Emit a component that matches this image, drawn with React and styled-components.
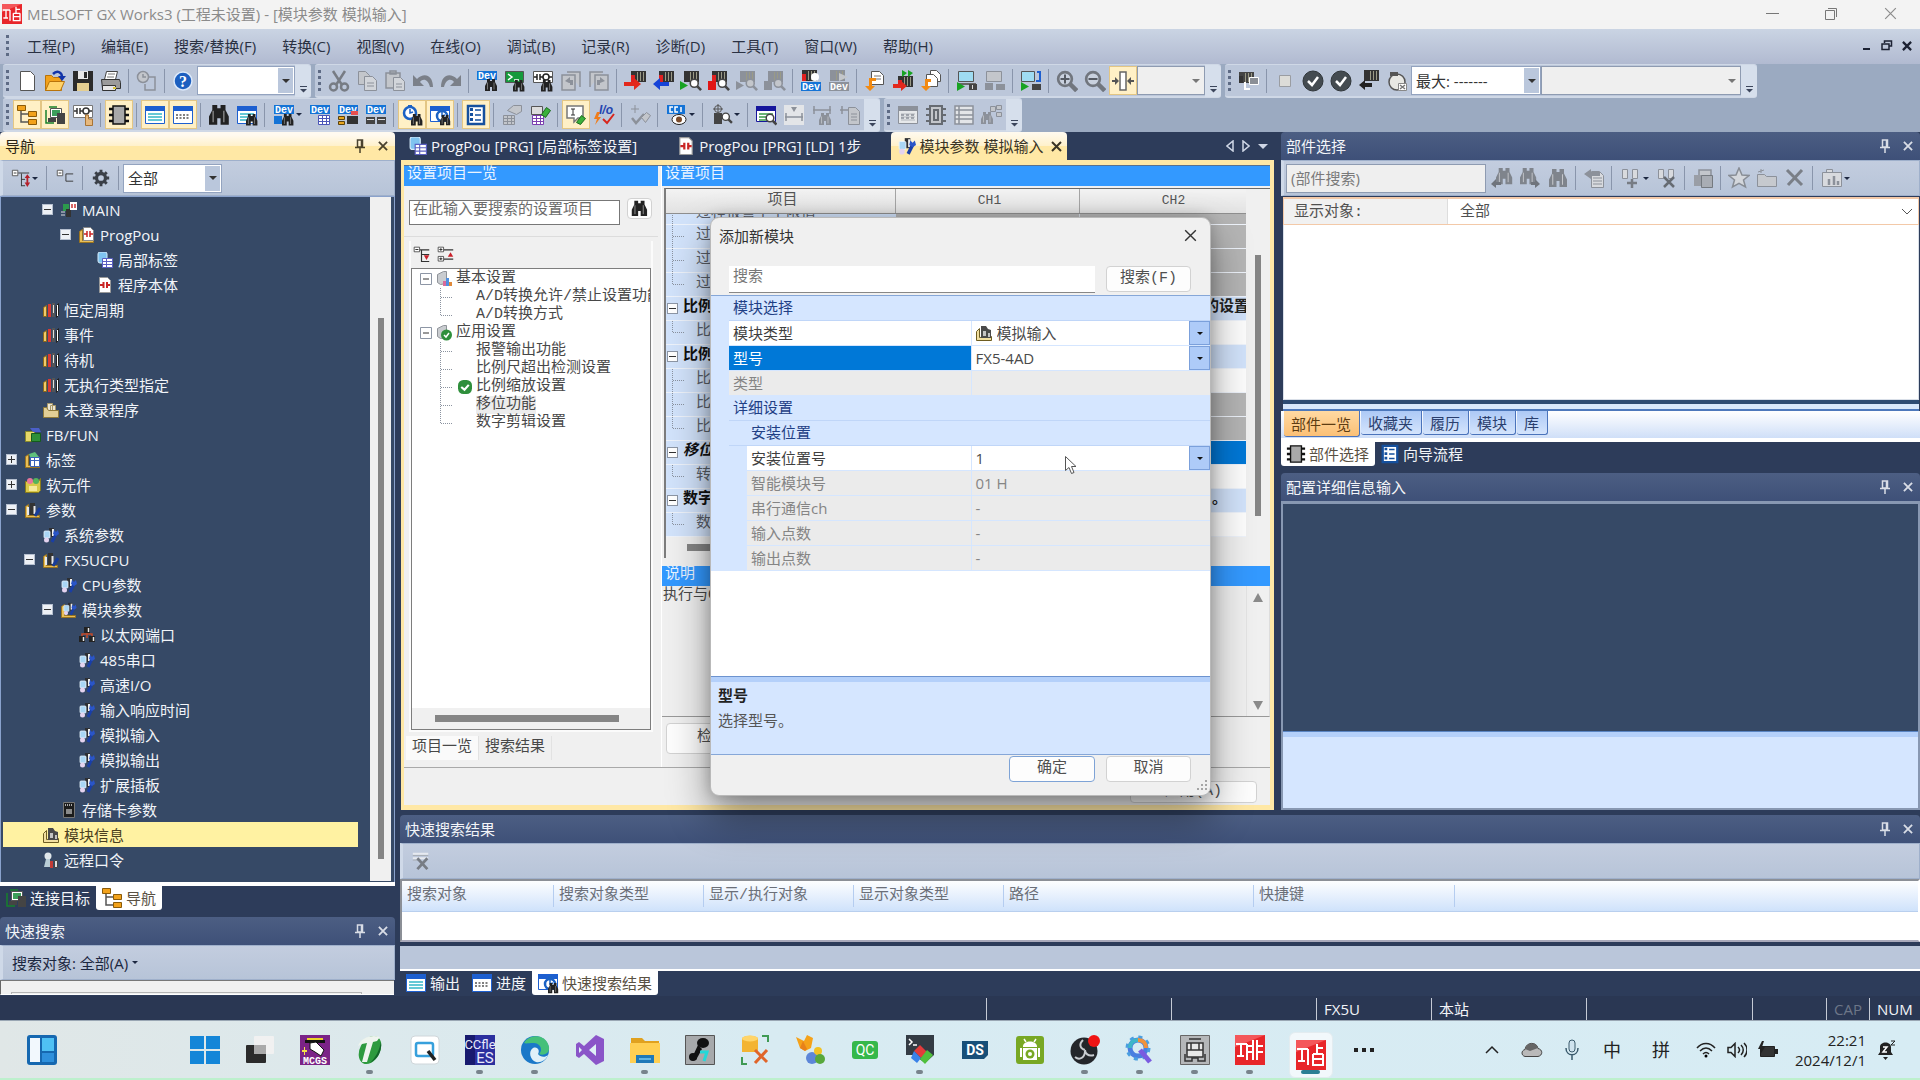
import React from "react";
import styled, { createGlobalStyle, css } from "styled-components";

const UI = `"Open Sans", "Noto Sans CJK SC", sans-serif`;
const FIXED = `"Liberation Mono", "Noto Sans CJK SC", monospace`;

const Global = createGlobalStyle`
  *, *::before, *::after { box-sizing: border-box; }
  body { margin: 0; background: #2d3c5a; font: 15px/20px ${UI}; color: #1c2740; }
  button, input, select { font: inherit; color: inherit; margin: 0; padding: 0; border: 0; border-radius: 0; background: none; }
  button { cursor: default; }
  select { appearance: none; outline: none; }
  input { outline: none; min-width: 0; }
  svg { display: block; flex: none; }
  table { border-collapse: collapse; table-layout: fixed; }
  ul { margin: 0; padding: 0; list-style: none; }
`;

/* ---------- drawing parts shared by the icons ---------- */
const At = ({ x = 0, y = 0, s = 1, children }) => <g transform={`translate(${x} ${y}) scale(${s})`}>{children}</g>;
const Bino = ({ x, y, s, c = "#222" }) => (
  <At x={x} y={y} s={s}>
    <path fill={c} d="M2 0h3v2h2V0h3v3l2 4v5H7V8H5v4H0V7l2-4z" />
    <path stroke="#fff" strokeOpacity=".55" strokeWidth=".7" d="M2.5 3.5v7M9 3.5v7" />
  </At>
);
const Rack = ({ x, y, s, c = "#333", led = "#e02020" }) => (
  <At x={x} y={y} s={s}>
    <path fill={c} d="M0 0h15v11H0z" />
    <path fill={led} d="M0 4h4v7H0z" />
    <path stroke="#9a9a86" d="M6.5 1v9M9.5 1v9M12.5 1v9" />
  </At>
);
const Dev = ({ x = 1, y = 1, w = 20, c = "#1473d6" }) => (
  <At x={x} y={y}>
    <path fill={c} d={`M0 0h${w}v9H0z`} />
    <text x={w / 2} y="8" textAnchor="middle" fontSize="10" fontWeight="700" fontFamily="Liberation Mono, monospace" fill="#fff">Dev</text>
  </At>
);
const Mag = ({ x, y, s, c = "#444", f = "#fff" }) => (
  <At x={x} y={y} s={s}>
    <path stroke={c} strokeWidth="2.5" d="M7.5 7.5l4 4" />
    <circle cx="5" cy="5" r="3.8" fill={f} stroke={c} strokeWidth="1.5" />
  </At>
);
const Win = ({ x = 1, y = 2, w = 20, h = 18, bar = "#1d5fd0", line = "#35b6c8", f = "#fff" }) => (
  <At x={x} y={y}>
    <path fill={f} stroke={bar} d={`M.5 .5h${w - 1}v${h - 1}H.5z`} />
    <path fill={bar} d={`M0 0h${w}v5H0z`} />
    <path stroke={line} strokeWidth="1.5" d={`M3 8h${w - 6}M3 11h${w - 6}M3 14h${w - 6}`} />
  </At>
);
const Page = ({ x, y, w = 12, h = 15, f = "#fff", c = "#555" }) => (
  <At x={x} y={y}><path fill={f} stroke={c} d={`M.5 .5h${w - 5}l4 4v${h - 5}H.5z`} /></At>
);
const Play = ({ x, y, c = "#17a323" }) => <path fill={c} transform={`translate(${x} ${y})`} d="M0 0l8 4.5-8 4.5z" />;
const Grid = ({ x, y, c = "#4a55b8", f = "#fff" }) => (
  <At x={x} y={y}><path fill={f} stroke={c} d="M.5 .5h11v9H.5zM.5 3.5h11M.5 6.5h11M4.5 .5v9M8.5 .5v9" /></At>
);
const Clock = ({ x, y, c = "#1b62c4", r = 6 }) => (
  <At x={x} y={y}>
    <circle cx="7" cy="8" r={r} fill="#fff" stroke={c} strokeWidth="2.5" />
    <path fill={c} d="M5 0h4v2H5z" /><path stroke={c} strokeWidth="1.5" fill="none" d="M7 4v4l3-1" />
  </At>
);
const G = "#8c919a";
const GL = "#c3c6cb";

const tools = {
  newFile: <Page x={4} y={1} w={15} h={20} />,
  open: <><path fill="#f2a21b" stroke="#b8730a" d="M1.5 20.5v-15h6l2 2h8v13z" /><path fill="#ffd36a" stroke="#b8730a" d="M1.5 20.5l4-9h15l-4 9z" /><path fill="none" stroke="#1234a8" strokeWidth="2.5" d="M9 4c4-4 9-2 9 3" /><path fill="#1234a8" d="M14 6h8l-4 5z" /></>,
  save: <><path fill="#2b2b2b" d="M1 1h20v20H1z" /><path fill="#e9e9e9" d="M6 1h10v8H6z" /><path fill="#2b2b2b" d="M12 2h3v6h-3z" /><path fill="#e5cf92" d="M5 13h12v8H5z" /></>,
  print: <><path fill="#fff" stroke="#444" d="M6.5 1.5h11l-2 8h-11z" /><path stroke="#777" d="M8 4h7M7 7h7" /><path fill="#9b9b9b" stroke="#333" d="M1.5 9.5h18l1 3v6h-18z" /><path fill="#e8e8e8" stroke="#333" d="M2.5 15.5h13v5h-13z" /><path fill="#d8c43a" d="M13 17h3v2h-3z" /></>,
  history: <><circle cx="7" cy="7" r="5.5" fill={GL} stroke={G} strokeWidth="1.5" /><path fill="none" stroke={G} strokeWidth="1.5" d="M7 4v3h3M13 7h6v13H9v-6" /></>,
  help: <><circle cx="11" cy="11" r="9" fill="#1c5fc0" stroke="#dbe8fa" strokeWidth="1.5" /><text x="11" y="17" textAnchor="middle" fontSize="16" fontWeight="700" fontFamily="Liberation Serif, serif" fill="#fff">?</text></>,
  cut: <g fill="none" stroke="#777c84" strokeWidth="2.5"><path d="M5 1l9 14M17 1L8 15" /><circle cx="5.5" cy="17" r="3.5" /><circle cx="16.5" cy="17" r="3.5" /></g>,
  copy: <><Page x={2} y={1} w={12} h={14} f={GL} c={G} /><Page x={8} y={6} w={13} h={15} f="#d2d5da" c={G} /><path stroke={G} d="M11 13h7M11 16h7" /></>,
  paste: <><path fill={GL} stroke={G} strokeWidth="1.5" d="M2 3h14v15H2zM6 1h6v3H6z" /><Page x={9} y={7} w={12} h={14} f="#d2d5da" c={G} /><path stroke={G} d="M12 14h6M12 17h6" /></>,
  undo: <path fill="#7b8089" d="M1 5v11h11l-4-4c3-4 8-3 10 5h3C21 5 12 2 5 9z" />,
  redo: <path fill="#7b8089" d="M21 5v11H10l4-4c-3-4-8-3-10 5H1C1 5 10 2 17 9z" />,
  devFind: <><Dev /><Bino x={9} y={9} s={1} /></>,
  cmdFind: <><path fill="#169a3c" stroke="#555" d="M1.5 1.5h18v11h-18z" /><path fill="none" stroke="#fff" strokeWidth="1.5" d="M4 4l4 3-4 3M10 10h5" /><Bino x={9} y={10} s={0.95} /></>,
  coilFind: <><path fill="#fff" stroke="#555" d="M1.5 1.5h19v11h-19z" /><path fill="none" stroke="#222" strokeWidth="1.5" d="M2 7h3M5 4v6M8 4v6M8 7h3M17 7h3" /><circle cx="14" cy="7" r="3" fill="none" stroke="#222" strokeWidth="1.5" /><Bino x={9} y={10} s={0.95} /></>,
  backG: <><path fill={GL} stroke={G} strokeWidth="1.5" d="M2 5h13v15H2zM7 2h13v15" /><path fill={G} d="M5 11l5-4v3h3v5h-3v-2H9z" /></>,
  fwdG: <><path fill={GL} stroke={G} strokeWidth="1.5" d="M7 5h13v15H7zM2 17V2h13" /><path fill={G} d="M17 11l-5-4v3H9v5h3v-2z" /></>,
  writePlc: <><Rack x={7} y={1} /><path fill="#e3281c" d="M0 12h10V8l7 6-7 6v-4H0z" /></>,
  readPlc: <><Rack x={7} y={1} /><path fill="#1643d8" d="M17 12H8V8l-7 6 7 6v-4h9z" /></>,
  monStart: <><Rack x={4} y={1} led="#333" /><Play x={0} y={11} /><Mag x={9} y={8} s={1.05} /></>,
  monStop: <><Rack x={4} y={1} /><path fill="#e01616" d="M0 11h8v9H0z" /><Mag x={9} y={8} s={1.05} /></>,
  monStartG: <><Rack x={4} y={1} c={G} led={G} /><Play x={0} y={11} c={G} /><Mag x={9} y={8} s={1.05} c={G} f={GL} /></>,
  monStopG: <><Rack x={4} y={1} c={G} led={G} /><path fill={G} d="M0 11h8v9H0z" /><Mag x={9} y={8} s={1.05} c={G} f={GL} /></>,
  devRack: <><Rack x={2} y={0} /><circle cx="15" cy="7" r="4" fill="#fff" /><Dev y={12} /></>,
  devRackG: <><Rack x={2} y={0} c={G} led={G} /><path fill={GL} d="M11 3l9 4-9 4z" /><Dev y={12} c={G} /></>,
  stepOne: <><Page x={7} y={1} w={13} h={14} /><path stroke="#777" d="M10 6h7M10 9h7" /><path fill="#f28a12" d="M5 8h7v3H8v5h3l-5 5-5-5h4z" /></>,
  force: <><Rack x={6} y={6} /><path fill="#17a323" d="M10 0l5 3-5 4zM16 0l5 3-5 4z" /><path fill="#e3281c" d="M1 14h8v-3l6 5-6 5v-3H1z" /></>,
  stepMany: <><Page x={10} y={0} w={11} h={12} /><Page x={6} y={4} w={12} h={13} /><path fill="#f28a12" d="M5 9h6v3H8v4h3l-5 5-5-5h4z" /></>,
  pcPlay: <><path fill="#9fdcf2" stroke="#555" d="M2.5 1.5h15v10h-15z" /><path fill="#666" d="M1 13h19v2H1z" /><Play x={1} y={12} /><path fill="#444" d="M13 14h8v6h-8z" /><path stroke="#ddd" d="M16.5 15v4" /></>,
  pcStopG: <><path fill={GL} stroke={G} d="M2.5 1.5h15v10h-15z" /><path fill={G} d="M1 13h8v7H1zM12 14h9v6h-9z" /></>,
  pcLink: <><path fill="#9fdcf2" stroke="#555" d="M1.5 1.5h13v10h-13z" /><path fill="none" stroke="#1d5fd0" strokeWidth="2" d="M17 2h3v9h-4" /><Play x={1} y={12} /><path fill="#444" d="M12 14h9v6h-9z" /></>,
  zoomIn: <><Mag x={0} y={0} s={1.8} c="#71767e" f="#c9d1de" /><path stroke="#555a62" strokeWidth="2" d="M9 4.5v9M4.5 9h9" /></>,
  zoomOut: <><Mag x={0} y={0} s={1.8} c="#71767e" f="#c9d1de" /><path stroke="#555a62" strokeWidth="2" d="M4.5 9h9" /></>,
  fit: <><path fill="#fff" stroke="#666" strokeWidth="1.5" d="M8 2h6v18H8z" /><path fill="#555" d="M0 10h3V7l4 4-4 4v-3H0zM22 10h-3V7l-4 4 4 4v-3h3z" /></>,
  sim: <><Rack x={1} y={2} led="#333" c="#444" /><path fill="#8b8f96" stroke="#fff" d="M11.5 7.5h9v7h-9z" /><path fill="none" stroke="#fff" strokeWidth="2" d="M7 12v7h5" /></>,
  square: <path fill="#dcdcd8" stroke="#9a9da2" d="M5.5 5.5h11v11h-11z" />,
  check: <><circle cx="11" cy="11" r="10" fill="#444b50" stroke="#30363a" /><path fill="none" stroke="#fff" strokeWidth="2.5" d="M6 11l4 4 6-8" /></>,
  rackBack: <><Rack x={6} y={0} led="#333" /><path fill="#222" d="M14 13H7v-3l-6 5 6 5v-3h7z" /></>,
  userX: <><circle cx="11" cy="12" r="8" fill="#e8e8e4" stroke="#555" strokeWidth="1.5" /><path fill="#555" d="M4 2h8v4H4z" /><path fill="#fff" stroke="#888" d="M12.5 13.5h8v7h-8z" /><path stroke="#777" strokeWidth="1.5" d="M14 15l5 4M19 15l-5 4" /></>,
  tree: <><path fill="none" stroke="#555" strokeWidth="1.5" d="M5 6v12h7M5 10h7" /><path fill="#f2a21b" stroke="#8a5a08" d="M1.5 1.5h8v5h-8zM12.5 7.5h8v5h-8zM12.5 15.5h8v5h-8z" /></>,
  conn: <><path fill="none" stroke="#17802c" strokeWidth="1.5" d="M5 3h8M2 6v13h8" /><path fill="#fff" stroke="#555" d="M6.5 4.5h11v9h-11z" /><path fill="#3c9f5a" d="M8 6h8v6H8z" /><path fill="#444" d="M13 9h8v11h-8zM4 14h8v4H4z" /></>,
  coilHand: <><path fill="#fff" stroke="#777" d="M1.5 1.5h19v12h-19z" /><path fill="none" stroke="#333" strokeWidth="1.5" d="M2 7h3M5 4v6M8 4v6M8 7h3M17 7h3" /><circle cx="14" cy="7" r="3" fill="none" stroke="#333" strokeWidth="1.5" /><path fill="#e6b87d" stroke="#a87434" d="M13.5 21.5V11l3 0v4h4v6.5z" /></>,
  chip: <><path fill="none" stroke="#111" strokeWidth="2.5" d="M1 5h20M1 11h20M1 17h20" /><path fill="#a9a9a9" stroke="#111" strokeWidth="1.5" d="M5 2h12v18H5z" /></>,
  winBlue: <Win />,
  winDots: <><Win line="#fff" /><path stroke="#555" strokeDasharray="2 1.5" strokeWidth="1.5" d="M4 11h14M4 14h14" /></>,
  bino: <Bino x={1} y={1} s={1.65} c="#222" />,
  winFind: <><Win /><Bino x={10} y={10} s={0.95} /></>,
  devBino: <><Dev /><path fill="#1473d6" d="M1 12h8v8H1z" /><Bino x={9} y={10} s={0.95} /></>,
  devTable: <><Dev /><Grid x={9} y={11} /></>,
  devFlow: <><Dev /><path fill="#e8a51e" stroke="#5c430c" d="M1.5 12.5h6v3h-6zM1.5 17.5h6v3h-6z" /><path fill="#333" d="M10 12h11v8H10z" /><path fill="#e85050" d="M14 7h7v4h-7z" /></>,
  devUnits: <><Dev /><path fill="#444" d="M1 13h9v7H1zM12 13h9v7h-9z" /><path stroke="#ddd" d="M2 15.5h7M13 15.5h7" /></>,
  clockFind: <><Clock x={2} y={1} /><Bino x={10} y={10} s={0.95} /></>,
  winClock: <><Win h={16} line="#fff" /><Clock x={6} y={4} r={5} /><Bino x={11} y={11} s={0.85} /></>,
  listPage: <><path fill="#fff" stroke="#15509e" strokeWidth="2.5" d="M3 2h16v18H3z" /><path stroke="#15509e" strokeWidth="1.5" d="M10 6h6M10 11h6M10 16h6" /><path fill="#15509e" d="M5 4h3v3H5zM5 9h3v3H5zM5 14h3v3H5z" /></>,
  toolG: <><path fill={GL} stroke={G} d="M6.5 6.5l6-5h8v6l-5 3z" /><Grid x={2} y={11} c={G} f={GL} /></>,
  toolPen: <><path fill="#ddd" stroke="#555" d="M2.5 2.5h11v8h-11z" /><Grid x={3} y={11} c="#7b3fb0" /><path fill="#3bb13b" stroke="#1c6a1c" d="M12.5 10.5l5-7 4 3-5 7z" /></>,
  notePen: <><path fill="#fff" stroke="#777" strokeWidth="1.5" d="M2 2h16v12h-5l-4 4v-4H2z" /><path stroke="#333" d="M6 5h4M8 5v6M6 11h4" /><path fill="#3bb13b" stroke="#1c6a1c" d="M11.5 18.5l5-7 4 3-5 6z" /></>,
  io: <><text x="13" y="10" textAnchor="middle" fontSize="12" fontWeight="700" fontStyle="italic" fontFamily="Liberation Sans, sans-serif" fill="#2444b0">I/o</text><path fill="none" stroke="#d8261c" strokeWidth="2" d="M10 15l4 4 7-9" /><path fill="#f07c1a" d="M4 8L1 15h3l-2 6 6-8H5l2-5z" /></>,
  checkG: <><path stroke={G} d="M6 1v8M2 5h8" /><path fill="none" stroke={G} strokeWidth="2.5" d="M3 14l4 5 8-9" /><path fill={GL} stroke={G} d="M12.5 13.5l5-5 4 3-5 7z" /></>,
  dciEye: <><path fill="#1473d6" d="M1 1h18v9H1z" /><path stroke="#fff" strokeWidth="1.5" fill="none" d="M7 3H4v5h3M12 3H9v5h3M15 3v5" /><ellipse cx="13" cy="15.5" rx="7" ry="5" fill="#fff" stroke="#222" /><circle cx="13" cy="15.5" r="3" fill="#7a4a2a" /></>,
  lampMag: <><path fill="#444" d="M3 9h8v11H3z" /><circle cx="7" cy="5" r="3.5" fill="none" stroke="#555" /><path stroke="#555" d="M7 0v10M2 5h10" /><Mag x={10} y={8} s={0.95} /></>,
  winMag: <><Win h={16} bar="#16169c" line="#3a9a4a" /><Mag x={10} y={9} s={1} /></>,
  rulerG: <><path fill="#e3e5e8" d="M1 1h20v20H1z" /><path stroke={G} strokeWidth="1.5" d="M2 13h18M3 9v8M19 9v8" /><path fill={G} d="M8 3h6l-3 5z" /></>,
  rulerFindG: <><path stroke={G} strokeWidth="1.5" d="M2 6h18M3 2v8M19 2v8" /><Bino x={8} y={9} s={1} c={G} /></>,
  rulerListG: <><path stroke={G} strokeWidth="1.5" d="M1 6h9M3 2v8" /><Page x={9} y={3} w={12} h={18} f={GL} c={G} /><path stroke={G} d="M12 10h6M12 13h6M12 16h6" /></>,
  winG: <><Win bar={G} line={GL} f="#e6e8ea" /><path stroke={G} strokeDasharray="3 2" strokeWidth="1.5" d="M4 11h14M4 14h14" /></>,
  chipG: <><path fill="none" stroke="#666b72" strokeWidth="2" d="M1 5h20M1 11h20M1 17h20" /><path fill={GL} stroke="#666b72" strokeWidth="2" d="M5 2h12v18H5zM9 6h4v10H9z" /></>,
  tableG: <path fill="#e3e5e8" stroke={G} strokeWidth="1.5" d="M2 2h18v18H2zM2 6h18M2 11h18M2 15h18M6 2v18" />,
  structG: <><Bino x={0} y={8} s={1} c={G} /><path fill={GL} stroke={G} d="M9.5 2.5h5v5h-5zM15.5 1.5h5v4h-5zM15.5 8.5h5v4h-5z" /></>,
  binoLeft: <><Bino x={5} y={1} s={1.35} c="#7f848c" /><path fill="#6f747c" d="M10 15H5v-3l-5 5 5 4v-3h5z" /></>,
  binoRight: <><Bino x={1} y={1} s={1.35} c="#7f848c" /><path fill="#6f747c" d="M12 15h4v-3l5 5-5 4v-3h-4z" /></>,
  binoG: <Bino x={2} y={2} s={1.5} c="#7f848c" />,
  listPlusG: <><Page x={8} y={4} w={13} h={17} f="#d8dade" c={G} /><path stroke={G} d="M10 11h9M10 14h9M10 17h9" /><path fill={G} d="M1 7l7-5v3h9v4H8v3z" /></>,
  nodePlusG: <><path fill="#d8dade" stroke={G} d="M2.5 2.5h5v9h-5zM12.5 2.5h5v9h-5z" /><path stroke="#777c84" strokeWidth="2.5" d="M12 12v9M7 16h10" /></>,
  nodeXG: <><path fill="#d8dade" stroke={G} d="M2.5 2.5h5v9h-5zM12.5 2.5h5v9h-5z" /><path stroke="#666b72" strokeWidth="2.5" d="M8 10l10 10M18 10L8 20" /></>,
  boxesG: <><path fill={GL} stroke={G} strokeWidth="1.5" d="M7 3h12v8H7z" /><path fill="#9a9ea6" d="M2 8h10v11H2z" /><path fill="#a9adb4" stroke="#74797f" d="M9.500 8.500h11v12h-11z" /></>,
  star: <path fill="#d4d7dc" stroke="#888d95" strokeWidth="1.5" d="M11 1l3 7 7 .5-5.5 4.5L17.5 20 11 16.3 4.5 20l2-7L1 8.500 8 8z" />,
  folderG: <path fill="#c6c9ce" stroke={G} d="M1.5 7.5h7l2 2h10v10h-19zM5 2v4M2 5l6-2" />,
  xG: <path stroke="#7a7f87" strokeWidth="3" d="M3 3l15 15M18 3L4 18" />,
  chartBoxG: <><path fill="#d8dade" stroke={G} d="M1.5 5.5h19v14h-19zM5.5 2.5h6v3h-6z" /><path stroke={G} strokeWidth="2.5" d="M8 18v-6M13 18V9M17 18v-4" /></>,
  clearG: <><path stroke="#e7eaef" strokeWidth="2" d="M2 3h17M2 8h17" /><path stroke="#a7abb2" d="M2 5h17M2 10h8" /><path stroke="#777c84" strokeWidth="3" d="M7 8l11 12M18 8L7 20" /></>,
  expandAll: <><path fill="#fff" stroke="#555" d="M1.5 2.5h6v6h-6z" /><path stroke="#333" d="M3 5.5h3M8 5.5h12M11.5 6v14M11.5 12.5h4M11.5 19.5h4" /><path fill="#b5202a" d="M18 7l3 4h-2v5h2l-3 5-3-5h2v-5h-2z" /></>,
  branch: <><path fill="#fff" stroke="#555" d="M2.5 2.5h6v6h-6z" /><path fill="none" stroke="#333" d="M4 5.5h3M20 6.5h-8v8h8" /></>,
  gear: <><circle cx="11" cy="11" r="5.5" fill="none" stroke="#3a3f47" strokeWidth="4" /><path stroke="#3a3f47" strokeWidth="3.5" d="M11 1v4M11 17v4M1 11h4M17 11h4M4 4l3 3M15 15l3 3M18 4l-3 3M7 15l-3 3" /></>,
  setExpand: <><path fill="#fff" stroke="#333" d="M1.500 1.500h7v6h-7z" /><path fill="none" stroke="#333" strokeWidth="1.500" d="M3 4.500h4M9 5h12M11 5v15h10M11 11h10" /><path fill="#c9202a" d="M14 12h7l-3.500 6z" /></>,
  setFold: <><path fill="#fff" stroke="#333" d="M1.5 1.5h7v6h-7zM1.5 13.5h7v6h-7z" /><path stroke="#333" strokeWidth="1.5" d="M3 4.5h4M5 3v3M3 16.5h4M5 15v3M9 5h12M9 17h12" /><path fill="#c9202a" d="M14 14h7l-3.5-6z" /></>,
};
const Icon = ({ n, size = 22 }) => <svg width={size} height={size} viewBox="0 0 22 22" aria-hidden="true">{tools[n]}</svg>;

const folder = <path fill="#e8bf58" stroke="#9b7420" d="M.5 4.5l3-2v11l11 0v2H.5z" />;
const param = (
  <><path fill="#2d2f33" d="M6 1h5v9H6z" /><path stroke="#f0f0f0" strokeWidth="2" d="M10 2v7" /><rect x="1" y="4" width="6" height="7" rx="1" fill="#a9d6f5" stroke="#e9f4fc" strokeWidth=".8" /><circle cx="3.500" cy="13" r="2.500" fill="#e4d3ef" /><path stroke="#1a3fa6" strokeWidth="3" d="M9 15l4-8" /><path fill="#2a55c8" d="M11 3l2 2 2-2 1 4-3 2-3-2z" /></>
);
const small = {
  main: <><path fill="#2c9a4c" d="M2 2h6v7H2z" /><path fill="#333" d="M5 7h5v8H5z" /><path fill="#fff" d="M9 0h7v8H9z" /><path stroke="#c33" strokeWidth="1.5" d="M11 2v4M14 2v4" /><path stroke="#ddd" d="M0 10h4M0 13h4" /></>,
  pou: <>{folder}<path fill="#fff" stroke="#888" d="M4.5 .5h7l3 3v10h-10z" /><path stroke="#c92525" strokeWidth="1.5" d="M5 7h3M8 4v6M11 4v6M11 7h3" /></>,
  local: <><rect x="1" y="0" width="9" height="11" rx="2" fill="#7fc4f0" stroke="#d5ecfb" /><path fill="#fff" stroke="#5a5fc0" d="M5.5 6.5h10v9h-10zM5.5 9.5h10M5.5 12.5h10M9.5 6.5v9" /></>,
  body: <><path fill="#fff" stroke="#999" d="M2.5 .5h8l3 3v12h-11z" /><path stroke="#c92525" strokeWidth="2" d="M3 8h3M6.5 5v6M10 5v6M10 8h3" /></>,
  books: <><path fill="#f0cb6a" stroke="#8f6a1a" d="M.5 5.5l3-2v11h-3z" /><path fill="#d83a34" d="M5 2h3v13H5z" /><path fill="#555" d="M9 1h3v14H9z" /><path stroke="#ddd" d="M10.5 3v8" /><path fill="#fff" stroke="#222" d="M13.5 3.5l2-2v12l-2 2z" /></>,
  stack: <><path fill="#ece7d6" stroke="#a89868" d="M4.5 1.5h5v11h-5zM7.5 3.5h5v10h-5z" /><path fill="#e2cf96" stroke="#8f7a3a" d="M.5 5.5h3l2 3h10v7H.5z" /></>,
  fb: <><path fill="#e6d86a" stroke="#8a8a2a" d="M.5 4.5h9v10h-9z" /><path fill="#4b5fc8" d="M5 1h9l2 4H8z" /><path fill="#2e8f38" stroke="#145c1c" d="M6.5 6.5h9v8h-9z" /></>,
  label: <>{folder}<path fill="#5fc07c" d="M4 2l6-2 4 5H5z" /><path fill="#fff" stroke="#3a62b8" d="M5.5 5.5h9v9h-9zM5.5 8.5h9M9.5 5.5v9" /></>,
  device: <><path fill="#d9c94a" stroke="#8a7c1a" d="M.5 4.5h13l2-3v12l-2 2H.5z" /><circle cx="5" cy="4" r="3" fill="#e8759a" /><circle cx="11" cy="4" r="3" fill="#54b45c" /><path fill="#f6ea9c" d="M4 9h8v5H4z" /></>,
  paramFolder: <>{folder}<path fill="#333" d="M5 1h5v12H5z" /><path stroke="#e8e8e8" strokeWidth="2" d="M9.5 4v8M3 5v8" /><path stroke="#173c9a" strokeWidth="3" d="M10 14l5-8" /></>,
  param,
  modFolder: <>{folder}<g transform="translate(2 0) scale(.85)">{param}</g></>,
  lan: <><path fill="none" stroke="#c24a2a" strokeWidth="1.5" d="M8 5v6M3 10V7h10v3" /><path fill="#222" d="M5 0h6v6H5zM0 9h6v6H0zM10 9h6v6h-6z" /><path stroke="#e8e8e8" strokeWidth="1.5" d="M9.5 1v4M4.5 10v4M14.5 10v4" /></>,
  card: <><path fill="#1c1c1c" stroke="#777" d="M2.5 .5h11v15h-11z" /><path stroke="#aaa" strokeDasharray="1 1" strokeWidth="2" d="M4 3h8" /><path fill="#8a8a8a" d="M5 7h6v5H5z" /></>,
  info: <><path fill="#f1dfa0" stroke="#6d5d22" d="M.5 6.5l3-3v9l12-1v4H.5z" /><path fill="#4a4a4a" d="M5 1h5l2 3 3 1v8H5z" /><path fill="#c4c4c4" d="M7 6h3v5H7zM12 8h2v4h-2z" /></>,
  pass: <><circle cx="5" cy="4" r="3.5" fill="#dfe6ea" /><path fill="#b9cdd6" d="M3 7h4v8H1z" /><path fill="#c23a34" d="M7 9h3v7H7z" /><path fill="#ddd" stroke="#444" d="M11.5 8.5h3v7h-3z" /></>,
};
const Small = ({ n, size = 16 }) => <svg width={size} height={size} viewBox="0 0 16 16" aria-hidden="true">{small[n]}</svg>;

const Pin = () => <svg width="12" height="14" viewBox="0 0 12 14"><path fill="none" stroke="currentColor" strokeWidth="1.5" d="M3.5 1h5v7h-5zM1 8.500h10M6 9v5M7.500 1v7" /></svg>;
const Cross = ({ s = 11, w = 2 }) => <svg width={s} height={s} viewBox="0 0 11 11"><path stroke="currentColor" strokeWidth={w} d="M1 1l9 9M10 1l-9 9" /></svg>;
const Down = ({ s = 8 }) => <svg width={s} height={s / 2} viewBox="0 0 8 4"><path fill="currentColor" d="M0 0h8L4 4z" /></svg>;

/* ---------- frame ---------- */
const Shell = styled.div`min-height: 100vh; display: flex; flex-direction: column; background: #2d3c5a;`;
const TitleBar = styled.header`
  height: 29px; display: flex; align-items: center; gap: 5px; padding: 0 22px 2px 2px; background: #f3f3f3; color: #8b8b8b;
  span { flex: 1; white-space: nowrap; }
`;
const WinButtons = styled.div`display: flex; gap: 44px; align-items: center; button { width: 15px; display: grid; place-items: center; }`;
const MenuBar = styled.nav`
  height: 35px; display: flex; align-items: center; gap: 2px; padding: 0 8px 2px 3px;
  background: linear-gradient(#cad4e3, #b1bad1); color: #2a3143;
`;
const MenuItem = styled.button`padding: 0 12px; white-space: nowrap;`;
const Grip = styled.i`
  flex: none; width: 3px; height: 22px; margin: 0 4px 0 3px;
  background: repeating-linear-gradient(#5e6b85 0 3px, transparent 3px 6px);
`;
const MdiButtons = styled.div`margin-left: auto; display: flex; gap: 9px; align-items: center; color: #1c2233;`;
const ToolRow = styled.div`height: 34px; display: flex; gap: 4px; padding-left: 3px; background: #9baac1; overflow: hidden;`;
const ToolBar = styled.div`
  display: flex; align-items: center; height: 34px; background: #bcc7da; border: 1px solid #cfd8e6; border-width: 1px 0 2px 0; border-radius: 3px;
`;
const ToolButton = styled.button`
  width: ${p => p.$w || 28}px; height: 29px; flex: none; display: flex; align-items: center; justify-content: center; gap: 1px;
  ${p => p.$on && css`background: #fff0c6; border: 1px solid #e3c684;`}
`;
const Sep = styled.i`flex: none; width: 1px; height: 24px; margin: 0 4px 0 3px; background: #8995ab;`;
const More = styled.button`
  flex: none; width: ${p => p.$w || 16}px; height: 32px; display: flex; align-items: flex-end; justify-content: center; padding-bottom: 4px;
  background: #d6dfec; color: #3c465c; border-radius: 0 3px 3px 0;
  span { border-top: 1px solid #3c465c; padding-top: 2px; }
`;
const ComboBox = styled.span`
  flex: none; display: flex; align-items: center; width: ${p => p.$w}px; height: 29px;
  background: ${p => (p.$off ? "#efefef" : "#fff")}; border: 1px solid ${p => (p.$off ? "#8e9bb1" : "#93a3bf")}; color: ${p => (p.$off ? "#777" : "#333")};
  select { flex: 1; min-width: 0; height: 27px; padding-left: 4px; opacity: 1; }
  i { flex: none; width: 15px; height: 25px; margin: 1px; display: grid; place-items: center; background: ${p => (p.$off ? "none" : "#bac7dc")}; }
`;
const Combo = ({ label, value = "", ...p }) => (
  <ComboBox {...p}><select aria-label={label} defaultValue={value} disabled={p.$off}><option>{value}</option></select><i><Down /></i></ComboBox>
);

/* ---------- panels ---------- */
const Main = styled.main`flex: 1; display: grid; grid-template-columns: 395px minmax(0, 1fr); gap: 5px;`;
const Column = styled.div`display: flex; flex-direction: column; min-width: 0; min-height: 0;`;
const Upper = styled.div`flex: 1; display: grid; grid-template-columns: minmax(0, 1fr) 639px; gap: 6px;`;
const Head = styled.h2`
  margin: 0; flex: none; height: 28px; display: flex; align-items: center; gap: 12px; padding: 0 7px 0 5px; font: 15px/20px ${UI};
  border-radius: 4px 4px 0 0; color: ${p => (p.$active ? "#2b2413" : "#f3f5f9")};
  background: ${p => (p.$active ? "linear-gradient(#fffaf0 0 10%, #fff1cb 50%, #ffe8a5 50%)" : "linear-gradient(#4c5e83, #3e5078)")};
  span { flex: 1; }
  button { display: grid; place-items: center; opacity: .85; }
`;
const PanelHead = ({ children, active }) => (
  <Head $active={active}><span>{children}</span><button aria-label="固定"><Pin /></button><button aria-label="关闭"><Cross s={10} /></button></Head>
);
const Strip = styled.div`
  flex: none; height: ${p => p.$h || 36}px; display: flex; align-items: center; padding-left: ${p => p.$l || 8}px;
  background: linear-gradient(#c3cddf, #b7c4d8); border: 1px solid #9fb0cb; border-left: 3px solid #cfd9e8;
`;
const Tree = styled.div`flex: 1; display: flex; padding: 0 3px 1px 2px; border: 1px solid #8aa2cc; border-bottom: 0; background: #364966;`;
const TreeRows = styled.ul`flex: 1;`;
const TreeRow = styled.li`
  height: 25px; margin-right: 12px; display: flex; align-items: center; padding-left: ${p => 3 + p.$level * 18}px; white-space: nowrap;
  color: #f1f4f9; ${p => p.$on && css`background: #fff2a2; color: #4a4020;`}
  svg { margin-right: 5px; }
`;
const Expander = styled.button`
  width: 11px; height: 11px; margin-right: 8px; flex: none; visibility: ${p => (p.$sign ? "visible" : "hidden")};
  background: ${p => (p.$sign === "+" ? "linear-gradient(#333, #333) center / 1px 7px no-repeat," : "")} linear-gradient(#333, #333) center / 7px 1px no-repeat, #eef1f6;
  border: 1px solid #b5bfcf;
`;
const ScrollTrack = styled.div`
  flex: none; width: ${p => p.$w || 21}px; display: flex; justify-content: center; background: #f0f0f0; padding: ${p => p.$pad};
  &::before { content: ""; width: 6px; background: #858585; }
`;
const ScrollLine = styled.div`
  flex: none; height: 21px; display: flex; align-items: center; background: #f0f0f0; padding: ${p => p.$pad};
  &::before { content: ""; flex: 1; height: 7px; background: #858585; }
`;
const TabStrip = styled.div`flex: none; display: flex; height: ${p => p.$h || 35}px; align-items: flex-start; border-top: ${p => p.$b || 4}px solid #fff;`;
const PanelTab = styled.button`
  height: 24px; display: flex; align-items: center; gap: 3px; padding: 0 6px 0 5px; color: ${p => (p.$on ? "#5a5143" : "#f3f5f9")};
  background: ${p => (p.$on ? "#fff" : "none")}; border-radius: 0 0 3px 3px; white-space: nowrap;
`;
const SearchBody = styled.div`
  height: 15px; margin: 0 1px 1px 0; padding: 11px 32px 0 10px; background: #f0f0f0; border-top: 1px solid #777; border-bottom: 1px solid #fff; border-left: 1px solid #666;
  &::before { content: ""; display: block; height: 2px; border: 1px solid #b5b5b5; border-bottom: 0; }
`;

/* ---------- document ---------- */
const DocTabs = styled.div`height: 28px; flex: none; display: flex; padding: 0 7px 0 7px; color: #f3f5f9;`;
const DocTab = styled.button`
  display: flex; align-items: center; gap: 4px; padding: 0 5px 0 2px; white-space: nowrap; margin-right: ${p => p.$gap || 0}px;
  ${p => p.$on && css`background: linear-gradient(#fffaf0, #fff1cb 50%, #ffe8a5 50%); color: #3a3426; border-radius: 4px 4px 0 0; padding: 0 5px 0 7px;`}
`;
const DocArrows = styled.div`margin-left: auto; display: flex; gap: 8px; align-items: center; color: #cfd7e6;`;
const Doc = styled.section`
  flex: 1; margin: 0 1px 0 1px; padding: 5px 4px 5px 3px; background: #ffe8a6; display: flex; flex-direction: column; font-family: ${FIXED}; color: #484848;
`;
const DocBody = styled.div`flex: 1; display: flex; background: #f0f0f0; border-top: 1px solid #59718f;`;
const DocFoot = styled.div`height: 38px; padding: 13px 13px 0; background: #f0f0f0; border-top: 1px solid #a9a9a9; display: flex; justify-content: flex-end;`;
const BlueBar = styled.h3`margin: ${p => p.$top || 0}px 0 0; height: 20px; padding-left: 3px; font: 15px/18px ${FIXED}; color: #eaf4ff; background: #3399ff; flex: none;`;
const ListPane = styled.div`width: 254px; flex: none; display: flex; flex-direction: column; margin-right: 3px;`;
const Finder = styled.div`display: flex; gap: 7px; align-items: flex-start; padding: 12px 5px 0 5px; height: 51px; border-bottom: 1px solid #dcdcdc;`;
const FindInput = styled.input`width: 211px; height: 25px; margin-top: 2px; padding: 0 3px 4px; background: #fff; border: 1px solid #777; &::placeholder { color: #6c6c6c; opacity: 1; }`;
const FlatButton = styled.button`
  display: grid; place-items: center; background: #fdfdfd; border: 1px solid ${p => (p.$main ? "#7ea3d6" : "#d2d2d2")}; border-radius: 4px;
  width: ${p => p.$w}px; height: ${p => p.$h}px; color: #505050; line-height: 18px;
`;
const ListBox = styled.div`
  flex: 1; margin: 4px 5px 0; border: solid #fbfbfb; border-width: 0 2px 2px; display: flex; flex-direction: column; background: #f0f0f0;
`;
const ListTools = styled.div`display: flex; gap: 7px; height: 27px; align-items: center; padding-left: 2px;`;
const ListTree = styled.ul`flex: 1; display: flex; flex-direction: column; border: 1px solid #7d7d7d; background: #fff; padding-top: 1px; overflow: hidden; min-width: 0;`;
const ListRow = styled.li`
  height: 18px; display: flex; align-items: center; white-space: nowrap; padding-left: ${p => (p.$child ? 28 : 8)}px;
  svg { margin-right: 4px; }
  span { line-height: 18px; ${p => p.$on && css`background: #ececec;`} }
`;
const Blank = styled.i`width: 14px; flex: none; margin-right: 4px;`;
const Fill = styled.li`flex: 1;`;
const ListTabs = styled.div`display: flex; height: 35px; padding: 4px 0 0 2px; button { height: 24px; padding: 0 6px; border-right: 1px solid #e2e2e2; line-height: 20px; }
  button:first-child { background: #fafafa; }`;
const GridPane = styled.div`flex: 1; min-width: 0; display: flex; flex-direction: column; border-left: 1px solid #fff;`;
const GridRow = styled.div`display: flex; margin: 2px 0 0 2px; border-left: 2px solid #7d7d7d; border-top: 1px solid #696969;`;
const GridClip = styled.div`flex: 1; min-width: 0; overflow: hidden;`;
const SetTable = styled.table`
  width: calc(100% + 18px);
  th { height: 24px; padding: 0 0 0 4px; font-size: 13px; font-weight: 400; color: #555; background: linear-gradient(#f3f3f3, #e2e2e2); border-right: 1px solid #a5a5a5; border-bottom: 1px solid #8f8f8f; }
  th:first-child { font-size: 15px; }
  td { padding: 0; white-space: nowrap; overflow: hidden; border-bottom: 1px solid #eef3fb; }
`;
const NameCell = styled.td`
  background: #d2e3fb; font-weight: ${p => (p.$group ? 700 : 400)}; font-style: ${p => (p.$italic ? "italic" : "normal")}; color: ${p => (p.$group ? "#111" : "#5a5f68")};
  div { display: flex; align-items: ${p => (p.$first ? "flex-end" : "center")}; height: ${p => (p.$first ? 10 : 23)}px; overflow: hidden; gap: ${p => (p.$group ? 5 : 10)}px; padding-left: ${p => (p.$group ? 1 : 6)}px; }
  button { width: 11px; height: 11px; border: 1px solid #8d96a5; background: linear-gradient(#333, #333) center / 7px 1px no-repeat, #fff; flex: none; }
`;
const ValCell = styled.td`background: ${p => p.$bg}; border-right: 1px solid #d6dbe3; font-weight: 700; color: #222; text-align: right; && { padding-right: ${p => p.$r || 14}px; }`;
const Explain = styled.div`height: 131px; display: flex; padding: 0 0 0 1px; border-bottom: 1px solid #999; border-right: 1px solid #ddd;
  p { margin: 0; flex: 1; }`;
const ArrowCol = styled.div`width: 23px; display: flex; flex-direction: column; justify-content: space-between; align-items: center; padding: 7px 0 6px; color: #8a8a8a; border-left: 1px solid #e4e4e4;`;
const Foot = styled.div`padding: 6px 0 0 4px; height: 50px;`;

/* ---------- dialog ---------- */
const Layer = styled.div`position: absolute; inset: 0; display: flex; justify-content: center; align-items: flex-start; padding: 217px 0 0 1px; pointer-events: none;`;
const Dialog = styled.div`
  width: 501px; height: 579px; display: flex; flex-direction: column; background: #f0f0f0; border: 1px solid #b9b9b9; border-radius: 9px;
  box-shadow: 0 20px 42px rgba(0, 0, 0, .42), 0 0 14px rgba(0, 0, 0, .2); pointer-events: auto; color: #3c3c3c;
`;
const DialogHead = styled.div`height: 35px; display: flex; align-items: center; justify-content: space-between; padding: 0 13px 0 8px; color: #333;`;
const DialogFind = styled.div`
  height: 42px; display: flex; justify-content: space-between; align-items: flex-start; padding: 13px 19px 0 18px; font-family: ${FIXED};
  input { width: 366px; height: 27px; background: #fff; padding: 0 4px 3px; border-bottom: 1px solid #888; }
  input::placeholder { color: #777; opacity: 1; }
`;
const PropTable = styled.table`
  width: 100%; background: #d5e6ff; border-top: 1px solid #86a7d8;
  th, td { height: 25px; padding: 0; text-align: left; font-weight: 400; white-space: nowrap; }
`;
const PropGroup = styled.th`&& { padding: 0 0 2px ${p => (p.$sub ? 22 : 4)}px; } color: #1f3f85; border-bottom: 1px solid #c0d6f8;`;
const PropName = styled.th`
  color: ${p => (p.$off ? "#858585" : "#3f3f3f")};
  div { margin-left: ${p => (p.$sub ? 18 : 0)}px; padding-left: 4px; height: 24px; line-height: 24px; background: ${p => (p.$on ? "#0078d7" : p.$off ? "#ebebeb" : "#fff")}; ${p => p.$on && "color:#fff;"} }
`;
const PropValue = styled.td`
  border-left: 1px solid #d5e6ff;
  div { display: flex; align-items: center; gap: 5px; padding-left: 4px; height: 24px; background: ${p => (p.$off ? "#ebebeb" : "#fff")}; color: ${p => (p.$off ? "#858585" : "#4a4a4a")}; }
  select { flex: 1; height: 24px; min-width: 0; }
  i { width: 21px; height: 24px; display: grid; place-items: center; background: #aecbf8; border: 1px solid #7ba0db; color: #111; }
`;
const PropBlank = styled.div`flex: 1; background: #fff; border-bottom: 1px solid #6d93cf;`;
const PropNote = styled.div`
  height: 78px; padding: 3px 7px 0; background: #d5e6ff; border-top: 5px solid #b4d0fa; border-bottom: 1px solid #86a7d8;
  b { display: block; color: #222; } p { margin: 5px 0 0; color: #555; }
`;
const DialogFoot = styled.div`height: 40px; display: flex; justify-content: flex-end; align-items: flex-start; gap: 11px; padding: 1px 2px 0 0; font-family: ${FIXED}; svg { align-self: flex-end; margin: 0 0 3px -6px; }`;
const Pointer = styled.svg`position: absolute; left: calc(50% + 104px); top: 455px; pointer-events: none;`;

/* ---------- right side ---------- */
const PartSearch = styled.input`flex: none; width: 200px; height: 29px; margin-right: 2px; padding-left: 4px; background: #efefef; border: 1px solid #8e9bb1; &::placeholder { color: #7a7a7a; opacity: 1; }`;
const ShowRow = styled.label`
  height: 28px; margin: 1px 1px 0 2px; display: flex; align-items: center; background: #f1f1f1; border: 1px solid #f3c9a8; border-top-width: 2px; font-family: ${FIXED}; color: #505050;
  span { width: 163px; padding: 2px 0 0 10px; }
  select { flex: 1; height: 25px; padding: 2px 0 0 12px; background: #fff; border-left: 1px solid #ddd; }
  svg { width: 22px; height: 25px; background: #fff; }
`;
const PartList = styled.div`flex: 1; margin: 0 1px 0 2px; background: #fff; border: 1px solid #d9dfe8; border-top: 0;`;
const Bars = styled.div`height: 11px; margin: 0 1px 0 2px; background: #d8e7fb; border-top: 4px solid #2d4b73; border-bottom: 2px solid #4d78bb;`;
const PartTabs = styled.div`height: 27px; display: flex; align-items: flex-start; padding-left: 3px; background: linear-gradient(#fff, #cfdff8);`;
const PartTab = styled.button`
  height: ${p => (p.$on ? 26 : 24)}px; padding: 0 8px 0 7px; margin-right: 1px; white-space: nowrap; color: ${p => (p.$on ? "#5d3c12" : "#2a3f6e")};
  background: ${p => (p.$on ? "linear-gradient(#ffd9a2, #fbc076)" : "linear-gradient(#adc9f6, #d4e4fc)")}; border: solid #4a73bb; border-width: 0 1px 1px 0; border-radius: 0 0 3px 3px;
`;
const Config = styled.div`height: 309px; flex: none; border: 2px solid #8898b2; border-top-width: 3px; display: flex; flex-direction: column; background: #d5e6ff;`;
const ConfigDark = styled.div`flex: 1; background: #364966; border-bottom: 1px solid #5b86c4;`;
const ConfigNote = styled.div`height: 76px; border-top: 5px solid #b4d0fa; background: #d5e6ff;`;

/* ---------- results ---------- */
const Results = styled.section`margin-top: 5px; flex: none; height: 181px; display: flex; flex-direction: column;`;
const ResultBox = styled.div`height: 63px; background: #fff; border: 2px solid #8b8f96; border-right-color: #fff; border-bottom-color: #aab; overflow: hidden;`;
const ResultTable = styled.table`
  width: 100%; font-family: ${FIXED};
  th { height: 30px; padding: 0 0 0 5px; text-align: left; font-weight: 400; color: #6b6f78; background: linear-gradient(#fdfeff, #cfe2fb); border-bottom: 1px solid #b9cfee; white-space: nowrap; }
  th:not(:last-child) { background: linear-gradient(#b5cdf0, #b5cdf0) right 50% / 1px 22px no-repeat, linear-gradient(#fdfeff, #cfe2fb); }
`;
const GreyStrip = styled.div`height: 23px; margin-top: 4px; background: #bac6da;`;

/* ---------- status and task bars ---------- */
const Status = styled.footer`height: 24px; display: flex; justify-content: flex-end; align-items: flex-end; background: #2a3753; color: #f2f4f8; line-height: 22px;`;
const Cell = styled.span`width: ${p => p.$w}px; height: 22px; padding-left: 7px; border-left: 1px solid #c5cad5; color: ${p => (p.$off ? "#6d7688" : "#f2f4f8")};`;
const TaskBar = styled.footer`height: 60px; display: flex; align-items: center; padding: 0 16px 0 14px; background: linear-gradient(90deg, #e0e7e7, #d8ebf2 40%, #d7ecf4); border-top: 1px solid #9aa7b4; border-bottom: 2px solid #bdf0cd;`;
const TaskApp = styled.button`
  flex: none; width: ${p => p.$w || 55}px; height: 57px; margin-right: ${p => p.$gap || 0}px; display: flex; flex-direction: column; align-items: center; justify-content: flex-end; gap: 5px; padding-bottom: 4px;
  &::after { content: ""; height: 4px; border-radius: 2px; width: ${p => (p.$run === "on" ? 19 : 7)}px; background: ${p => (p.$run === "on" ? "#2b7f94" : p.$run ? "#78838c" : "transparent")}; }
`;
const Tile = styled.span`width: 44px; height: 46px; margin-bottom: -13px; display: grid; place-items: center; background: #f2f8fb; border-radius: 6px; border: 1px solid #e3ecf0;`;
const Tray = styled.div`margin-left: auto; display: flex; align-items: center; color: #222;`;
const TrayItem = styled.button`width: ${p => p.$w}px; display: grid; place-items: center; font-size: 18px;`;
const ClockText = styled.time`width: 85px; padding-right: 2px; text-align: right; font-size: 15px; line-height: 20px; white-space: nowrap;`;

/* ---------- task bar drawings ---------- */
const red = (body) => <><path fill="#e8262a" d="M0 0h30v30H0z" /><path fill="#f4575a" d="M0 0h30L0 12z" />{body}</>;
const apps = {
  widgets: <><rect width="30" height="30" rx="3" fill="#1668b0" /><path fill="#f2f8fd" d="M3 3h10v24H3z" /><path fill="#4fc1f4" d="M15 3h12v13H15z" /><path fill="#2e90dc" d="M15 18h12v9H15z" /></>,
  start: <path fill="#1486d8" d="M0 1h14v13H0zM16 1h14v13H16zM0 16h14v13H0zM16 16h14v13H16z" />,
  task: <><rect x="1" y="10" width="20" height="18" rx="1" fill="#2b2b2b" /><rect x="9" y="1" width="20" height="18" rx="1" fill="#f1f1f1" /><path fill="#aaa" d="M9 10h12v9H9z" /></>,
  mcgs: <><path fill="#7b2387" d="M0 0h30v30H0z" /><path fill="#111" d="M5 5h20v3H5z" /><path fill="#ecd22a" d="M7 3h16v2H7z" /><path fill="#fff" stroke="#111" d="M10 8l6-1 8 8-3 6-6-4-5-3z" /><path fill="#f2e14a" d="M2 15h5v2H2zM4 12h1v8H4z" /><text x="15" y="29" textAnchor="middle" fontSize="10" fontWeight="700" fontFamily="Liberation Mono, monospace" fill="#fff">MCGS</text></>,
  leaf: <><ellipse cx="15" cy="15" rx="10" ry="15" fill="#2e9a3e" transform="rotate(28 15 15)" /><path fill="#eef4ee" d="M3 11C6 3 16-1 25 2l-3 4-4 1-6 20-5 0 5-19-5 1z" /><path fill="#14632a" d="M15 28c8-4 12-12 11-21-2 9-5 15-11 21z" /></>,
  snip: <><rect x="1" y="1" width="28" height="28" rx="4" fill="#fff" stroke="#cfd6da" /><rect x="6" y="8" width="17" height="13" rx="2" fill="none" stroke="#37a0dc" strokeWidth="2.5" /><path stroke="#222" strokeWidth="3.5" d="M18 16l7 9" /></>,
  ccf: <><path fill="#2b2f9e" d="M0 0h30v30H0z" /><path fill="#181a6e" d="M0 0h10v30H0z" /><text x="15" y="14" textAnchor="middle" fontSize="13" fontFamily="Roboto, sans-serif" fill="#e9eafc">CCfle</text><text x="20" y="28" textAnchor="middle" fontSize="15" fontFamily="Roboto, sans-serif" fill="#e9eafc">ES</text></>,
  edge: <><circle cx="15" cy="15" r="14" fill="#1a78c8" /><path fill="#45c07a" d="M4 8C9-1 26-2 29 12c1 7-6 9-10 7 5-5 0-12-6-11-4 0-7 1-9 0z" /><path fill="#dff0f8" d="M13 13c5-2 7 3 5 6 2 3 7 4 10 1-2 5-7 8-12 7-6-2-8-11-3-14z" /></>,
  vs: <><path fill="#8a55c8" d="M21 0l8 4v22l-8 4L9 19l-5 4-3-2V9l3-2 5 4z" /><path fill="#dff0f6" d="M21 9v12l-7-6zM4 12l3 3-3 3z" /></>,
  files: <><path fill="#e0a11f" d="M1 3h11l3 3h14v6H1z" /><path fill="#ffcf52" d="M0 8h30v20H0z" /><path fill="#1f79b8" d="M6 20h18v8H6z" /><path fill="#5fb4e6" d="M9 23h12v2H9z" /></>,
  probe: <><path fill="#a7a9ab" stroke="#555" d="M.5 .5h29v29H.5z" /><ellipse cx="18" cy="8" rx="6" ry="5" fill="#111" /><path fill="#111" d="M13 10l4 4-6 11H6z" /><circle cx="8" cy="22" r="4" fill="#111" /><path fill="none" stroke="#22d8d8" strokeWidth="3" d="M15 17h7l-3 9" /></>,
  db: <><path fill="#f3b433" d="M2 3c4-3 12-3 16 0v14H2z" /><ellipse cx="10" cy="3.5" rx="8" ry="3" fill="#ffd56a" /><path fill="none" stroke="#3f9a54" strokeWidth="2" d="M22 1h6v6M7 29H2v-7" /><path stroke="#e0652a" strokeWidth="3" d="M15 15l12 12M27 15L15 28" /></>,
  fly: <><path fill="#f5a21a" d="M1 2l8 4 3-6 6 3-2 10-6 3-5-3z" /><path fill="#e8811a" d="M8 6l4 8-2 2-5-3z" /><circle cx="17" cy="23" r="6" fill="#5d86d8" /><circle cx="23" cy="16" r="4" fill="#f2c224" /><circle cx="25" cy="24" r="5" fill="#57a83c" /></>,
  qc: <><rect x="2" y="6" width="26" height="18" rx="3" fill="#35b84a" /><text x="15" y="20" textAnchor="middle" fontSize="14" fontFamily="Roboto, sans-serif" fill="#fff">QC</text></>,
  term: <><path fill="#333b44" d="M1 0h28v20L20 28 9 20H1z" /><path fill="none" stroke="#fff" strokeWidth="1.5" d="M4 4l3 3-3 3M8 10h4" /><path fill="#e23b3b" d="M15 10l7 7-6 6-7-7z" /><path fill="#3a82e8" d="M9 16l7 7-4 5-6-5z" /><path fill="#4fc03c" d="M22 15l6 5-8 9-5-5z" /></>,
  ds: <><path fill="#174f78" d="M2 6h26v14l-4 4H2z" /><text x="15" y="20" textAnchor="middle" fontSize="14" fontWeight="700" fontFamily="Roboto, sans-serif" fill="#fff">DS</text></>,
  android: <><rect x="1" y="1" width="28" height="28" rx="3" fill="#78a824" /><path stroke="#fff" strokeWidth="1.5" d="M9 4l2 3M21 4l-2 3" /><path fill="#fff" d="M8 11c1-6 13-6 14 0v1H8zM5 13h2v9H5zM23 13h2v9h-2zM8 13h14v12H8z" /><circle cx="15" cy="19" r="4.5" fill="#78a824" /><circle cx="15" cy="19" r="2" fill="#fff" /></>,
  obs: <><circle cx="14" cy="16" r="13.5" fill="#24262a" /><path fill="none" stroke="#c9ccd0" strokeWidth="2" d="M13 5c-5 5-2 9 2 10M24 20c-6 2-9-2-9-5M5 22c5 4 10 0 10-6" /><circle cx="24" cy="6" r="6" fill="#f01414" /></>,
  gearApp: <><circle cx="13" cy="13" r="8" fill="none" stroke="#4a7ee0" strokeWidth="5" /><circle cx="13" cy="13" r="11" fill="none" stroke="#4a9ee0" strokeWidth="3" strokeDasharray="4 4.640" /><path fill="none" stroke="#f2923a" strokeWidth="4" d="M13 5c5 0 8 3 8 8" /><path fill="none" stroke="#3fb6c8" strokeWidth="4" d="M5 13c0-5 3-8 8-8" /><path stroke="#7a5be0" strokeWidth="5" d="M15 15l10 12" /></>,
  tram: <><path fill="#b5b7b9" stroke="#666" d="M.5 .5h29v29H.5z" /><path fill="#e8e8e8" stroke="#333" strokeWidth="1.5" d="M7 8h16v14H7z" /><path fill="none" stroke="#333" strokeWidth="1.5" d="M9 4h12M7 15h16M11 8v7M19 8v7M5 19v7h7v-3h6v3h7v-7" /></>,
  mitsu1: red(<g fill="none" stroke="#fff" strokeWidth="2"><path d="M1 9h11M6 9v12M2 21h7M12 9v16M18 5v20M22 5v20M13 11h5M13 17h5M22 11h6M22 17h6" /></g>),
  mitsu2: red(<g fill="none" stroke="#fff" strokeWidth="2"><path d="M1 9h11M6 9v12M2 21h7M12 9v16M17 14h10M21 4v10M21 8h6M17 14v11h10V14M17 19h10" /></g>),
};
const AppIcon = ({ n, size = 30 }) => <svg width={size} height={size} viewBox="0 0 30 30" aria-hidden="true">{apps[n]}</svg>;

/* ---------- data ---------- */
const menus = ["工程(P)", "编辑(E)", "搜索/替换(F)", "转换(C)", "视图(V)", "在线(O)", "调试(B)", "记录(R)", "诊断(D)", "工具(T)", "窗口(W)", "帮助(H)"];
const treeRows = [
  [2, "-", "main", "MAIN"], [3, "-", "pou", "ProgPou"], [4, "", "local", "局部标签"], [4, "", "body", "程序本体"],
  [1, "", "books", "恒定周期"], [1, "", "books", "事件"], [1, "", "books", "待机"], [1, "", "books", "无执行类型指定"], [1, "", "stack", "未登录程序"],
  [0, "", "fb", "FB/FUN"], [0, "+", "label", "标签"], [0, "+", "device", "软元件"], [0, "-", "paramFolder", "参数"], [1, "", "param", "系统参数"],
  [1, "-", "paramFolder", "FX5UCPU"], [2, "", "param", "CPU参数"], [2, "-", "modFolder", "模块参数"], [3, "", "lan", "以太网端口"],
  [3, "", "param", "485串口"], [3, "", "param", "高速I/O"], [3, "", "param", "输入响应时间"], [3, "", "param", "模拟输入"], [3, "", "param", "模拟输出"],
  [3, "", "param", "扩展插板"], [2, "", "card", "存储卡参数"], [1, "", "info", "模块信息"], [1, "", "pass", "远程口令"],
];
const GREY = "#b5b5b5", LIGHT = "#d2e3fb", WHITE = "#fdfdfd";
const setRows = [
  ["过程报警上上限值", GREY], ["过程报警上下限值", GREY], ["过程报警下上限值", GREY], ["过程报警下下限值", GREY],
  ["比例尺超出检测设置", LIGHT, "的设置"], ["比例尺超出检测启用", WHITE], ["比例缩放设置", LIGHT], ["比例缩放启用", WHITE],
  ["比例缩放上限值", GREY], ["比例缩放下限值", GREY], ["移位功能", "#0078d7"], ["转换值移位量", WHITE], ["数字剪辑设置", LIGHT, "。"], ["数字剪辑启用", WHITE],
];
const groups = [4, 6, 10, 12];
const ends = [3, 5, 9, 11, 13];
const propRows = [
  { group: "模块选择" }, { name: "模块类型", value: "模拟输入", pick: true, icon: true }, { name: "型号", value: "FX5-4AD", pick: true, on: true }, { name: "类型", value: "", off: true },
  { group: "详细设置" }, { group: "安装位置", sub: true }, { name: "安装位置号", value: "1", pick: true, sub: true },
  { name: "智能模块号", value: "01 H", off: true, sub: true }, { name: "串行通信ch", value: "-", off: true, sub: true }, { name: "输入点数", value: "-", off: true, sub: true }, { name: "输出点数", value: "-", off: true, sub: true },
];
const barOne = ["newFile", "open", "save", "print", "|", "history", "|", "help"];
const barTwo = ["cut", "copy", "paste", "undo", "redo", "|", "devFind", "cmdFind", "coilFind", "backG", "fwdG", "|", "writePlc", "readPlc", "monStart", "monStop", "monStartG", "monStopG", "|", "devRack", "devRackG", "|", "stepOne", "force", "stepMany", "|", "pcPlay", "pcStopG", "|", "pcLink", "|", "zoomIn", "zoomOut", "fit*"];
const barThree = ["sim", "|", "square", "check", "check", "rackBack", "userX"];
const barFour = ["tree*", "conn*", "coilHand", "|", "chip*", "|", "winBlue*", "winDots*", "|", "bino", "winFind", "|", "devBino+", "devTable", "devFlow", "devUnits", "|", "clockFind*", "winClock*", "|", "listPage*", "|", "toolG", "toolPen", "|", "notePen*", "io", "|", "checkG", "|", "dciEye+", "|", "lampMag+", "|", "winMag", "rulerG", "rulerFindG", "rulerListG"];
const barFive = ["winG", "chipG", "tableG", "structG"];
const partTools = ["binoLeft", "binoRight", "binoG", "|", "listPlusG", "|", "nodePlusG+", "nodeXG", "|", "boxesG", "|", "star", "folderG", "xG", "|", "chartBoxG+"];

const Tools = ({ items }) => items.map((it, i) => {
  if (it === "|") return <Sep key={i} />;
  const on = it.endsWith("*"), drop = it.endsWith("+"), n = it.replace(/[*+]/, "");
  return <ToolButton key={i} $on={on} $w={drop ? 37 : 28} aria-label={n}><Icon n={n} />{drop && <Down s={6} />}</ToolButton>;
});
const Branch = ({ end, h = 23 }) => <svg width="14" height={h} viewBox={`0 0 14 ${h}`}><path stroke="#8b93a0" strokeDasharray="1 1" d={`M.5 0v${end ? h / 2 : h}M1 ${Math.floor(h / 2) + 0.5}h11`} /></svg>;
const Tick = ({ s = 13 }) => <svg width={s} height={s} viewBox="0 0 13 13"><rect width="13" height="13" rx="5" fill="#2f8f3c" /><path fill="none" stroke="#fff" strokeWidth="2" d="M3 6.5l3 2.5 4-4.5" /></svg>;
const FoldBox = () => <svg width="12" height="12" viewBox="0 0 12 12"><path fill="#fff" stroke="#8d96a5" d="M.5 .5h11v11H.5z" /><path stroke="#333" d="M3 6h6" /></svg>;
const SetGlyph = ({ tick }) => (
  <svg width="16" height="16" viewBox="0 0 16 16"><path fill="#c9ccd0" stroke="#8f9399" d="M1.5 3.5l6-3h3v12l-6 1-3-2z" />
    {tick ? <><circle cx="10.5" cy="10" r="5.5" fill="#2f8f3c" /><path fill="none" stroke="#fff" strokeWidth="1.5" d="M8 10l2 2 3-4" /></> : <><path fill="#d86a9a" d="M7 10h3v5H7z" /><path fill="#4f8fe0" d="M10 7h3v8h-3z" /><path fill="#e08a3a" d="M13 11h3v4h-3z" /></>}
  </svg>
);
const ListItem = ({ children, end, tick, on }) => (
  <ListRow $child $on={on}><Branch h={18} end={end} />{tick ? <Tick s={14} /> : <Blank />}<span>{children}</span></ListRow>
);

export default function App() {
  return (
    <Shell>
      <Global />
      <TitleBar>
        <AppIcon n="mitsu2" size={20} />
        <span>MELSOFT GX Works3 (工程未设置) - [模块参数 模拟输入]</span>
        <WinButtons>
          <button aria-label="最小化"><svg width="13" height="13"><path stroke="#777" d="M0 6.5h13" /></svg></button>
          <button aria-label="还原"><svg width="13" height="13"><path fill="none" stroke="#777" d="M.5 3.5h9v9h-9zM3 1.5h8.5V10" /></svg></button>
          <button aria-label="关闭"><Cross s={13} w={1} /></button>
        </WinButtons>
      </TitleBar>
      <MenuBar>
        <Grip />
        {menus.map(m => <MenuItem key={m}>{m}</MenuItem>)}
        <MdiButtons>
          <button aria-label="最小化子窗口"><svg width="10" height="10"><path stroke="currentColor" strokeWidth="2" d="M1 8h7" /></svg></button>
          <button aria-label="还原子窗口"><svg width="12" height="11"><path fill="none" stroke="currentColor" strokeWidth="1.5" d="M3.5 3V1h7v5H8M1 4h7v5.5H1z" /></svg></button>
          <button aria-label="关闭子窗口"><Cross s={10} w={2.5} /></button>
        </MdiButtons>
      </MenuBar>
      <ToolRow>
        <ToolBar><Grip /><Tools items={barOne} /><Combo label="帮助搜索" $w={98} /><More aria-label="更多"><span><Down s={7} /></span></More></ToolBar>
        <ToolBar><Grip /><Tools items={barTwo} /><Combo label="显示倍率" $w={68} $off /><More aria-label="更多"><span><Down s={7} /></span></More></ToolBar>
        <ToolBar><Grip /><Tools items={barThree} /><Combo label="最大" value="最大: -------" $w={130} /><Combo label="监视对象" $w={200} $off /><More aria-label="更多"><span><Down s={7} /></span></More></ToolBar>
      </ToolRow>
      <ToolRow>
        <ToolBar><Grip /><Tools items={barFour} /><More aria-label="更多"><span><Down s={7} /></span></More></ToolBar>
        <ToolBar><Grip /><Tools items={barFive} /><More aria-label="更多"><span><Down s={7} /></span></More></ToolBar>
      </ToolRow>

      <Main>
        <Column>
          <PanelHead active>导航</PanelHead>
          <Strip $l={3}>
            <ToolButton $w={37} aria-label="全部展开"><Icon n="expandAll" size={20} /><Down s={6} /></ToolButton><Sep />
            <ToolButton aria-label="分支"><Icon n="branch" size={20} /></ToolButton><Sep />
            <ToolButton aria-label="设置"><Icon n="gear" size={18} /></ToolButton><Sep />
            <Combo label="显示范围" value="全部" $w={99} />
          </Strip>
          <Tree>
            <TreeRows>
              {treeRows.map(([level, sign, icon, text]) => (
                <TreeRow key={text} $level={level} $on={icon === "info"}><Expander $sign={sign} aria-label={`展开${text}`} /><Small n={icon} />{text}</TreeRow>
              ))}
            </TreeRows>
            <ScrollTrack $pad="121px 0 22px" />
          </Tree>
          <TabStrip>
            <PanelTab><Icon n="conn" />连接目标</PanelTab>
            <PanelTab $on><Icon n="tree" />导航</PanelTab>
          </TabStrip>
          <PanelHead>快速搜索</PanelHead>
          <Strip $h={35} $l={9}><button>搜索对象: 全部(A)</button>&nbsp;<Down s={6} /></Strip>
          <SearchBody />
        </Column>

        <Column>
          <Upper>
            <Column>
              <DocTabs>
                <DocTab $gap={33}><Small n="local" size={18} />ProgPou [PRG] [局部标签设置]</DocTab>
                <DocTab $gap={24}><Small n="body" size={18} />ProgPou [PRG] [LD] 1步</DocTab>
                <DocTab $on><Small n="param" size={18} />模块参数 模拟输入&nbsp;<Cross s={11} /></DocTab>
                <DocArrows>
                  <svg width="8" height="12"><path fill="none" stroke="currentColor" strokeWidth="1.5" d="M7 1v10L1 6z" /></svg>
                  <svg width="8" height="12"><path fill="none" stroke="currentColor" strokeWidth="1.5" d="M1 1v10l6-5z" /></svg>
                  <Down s={10} />
                </DocArrows>
              </DocTabs>
              <Doc>
                <DocBody>
                  <ListPane>
                    <BlueBar>设置项目一览</BlueBar>
                    <Finder>
                      <FindInput aria-label="搜索设置项目" placeholder="在此输入要搜索的设置项目" />
                      <FlatButton $w={25} $h={21} aria-label="搜索"><Icon n="bino" size={17} /></FlatButton>
                    </Finder>
                    <ListBox>
                      <ListTools><Icon n="setExpand" size={17} /><Icon n="setFold" size={17} /></ListTools>
                      <ListTree>
                        <ListRow><FoldBox /><SetGlyph />基本设置</ListRow>
                        <ListItem>A/D转换允许/禁止设置功能</ListItem>
                        <ListItem end>A/D转换方式</ListItem>
                        <ListRow><FoldBox /><SetGlyph tick />应用设置</ListRow>
                        <ListItem>报警输出功能</ListItem>
                        <ListItem>比例尺超出检测设置</ListItem>
                        <ListItem tick>比例缩放设置</ListItem>
                        <ListItem on>移位功能</ListItem>
                        <ListItem end>数字剪辑设置</ListItem>
                        <Fill />
                        <li><ScrollLine $pad="0 31px 0 23px" /></li>
                      </ListTree>
                    </ListBox>
                    <ListTabs><button>项目一览</button><button>搜索结果</button></ListTabs>
                  </ListPane>
                  <GridPane>
                    <BlueBar>设置项目</BlueBar>
                    <GridRow>
                      <GridClip>
                        <SetTable>
                          <colgroup><col /><col width="184" /><col width="184" /></colgroup>
                          <thead><tr><th>项目</th><th>CH1</th><th>CH2</th></tr></thead>
                          <tbody>
                            {setRows.map(([name, bg, text], i) => {
                              const group = groups.includes(i);
                              return (
                                <tr key={name}>
                                  <NameCell $group={group} $italic={i === 10} $first={i === 0}>
                                    <div>{group ? <button aria-label={`折叠${name}`} /> : <Branch end={ends.includes(i)} />}{name}</div>
                                  </NameCell>
                                  {group
                                    ? <ValCell colSpan="2" $bg={bg} $r={text === "。" ? 36 : 14}>{text}</ValCell>
                                    : <><ValCell $bg={bg} /><ValCell $bg={bg} /></>}
                                </tr>
                              );
                            })}
                          </tbody>
                        </SetTable>
                        <ScrollLine $pad="0 120px 0 21px" />
                      </GridClip>
                      <ScrollTrack $w={24} $pad="66px 0 42px" />
                    </GridRow>
                    <BlueBar $top={8}>说明</BlueBar>
                    <Explain><p>执行与CH间的移位功能有关的设置。</p><ArrowCol><svg width="10" height="9"><path fill="currentColor" d="M0 9h10L5 0z" /></svg><svg width="10" height="9"><path fill="currentColor" d="M0 0h10L5 9z" /></svg></ArrowCol></Explain>
                    <Foot><FlatButton $w={119} $h={31}>检查(K)</FlatButton></Foot>
                  </GridPane>
                </DocBody>
                <DocFoot><FlatButton $w={127} $h={22}>应用(A)</FlatButton></DocFoot>
              </Doc>
            </Column>

            <Column>
              <PanelHead>部件选择</PanelHead>
              <Strip $l={2}><PartSearch aria-label="部件搜索" placeholder="(部件搜索)" /><Tools items={partTools} /></Strip>
              <ShowRow><span>显示对象:</span><select defaultValue="全部"><option>全部</option></select><svg viewBox="0 0 22 25"><path fill="none" stroke="#555" d="M6 10l5 5 5-5" /></svg></ShowRow>
              <PartList />
              <Bars />
              <PartTabs>
                {["部件一览", "收藏夹", "履历", "模块", "库"].map((t, i) => <PartTab key={t} $on={i === 0}>{t}</PartTab>)}
              </PartTabs>
              <TabStrip>
                <PanelTab $on><Icon n="chip" size={20} />部件选择</PanelTab>
                <PanelTab><Icon n="listPage" size={20} />向导流程</PanelTab>
              </TabStrip>
              <PanelHead>配置详细信息输入</PanelHead>
              <Config><ConfigDark /><ConfigNote /></Config>
            </Column>
          </Upper>

          <Results>
            <PanelHead>快速搜索结果</PanelHead>
            <Strip $h={36} $l={4}><ToolButton aria-label="清除"><Icon n="clearG" size={20} /></ToolButton></Strip>
            <ResultBox>
              <ResultTable>
                <colgroup><col width="152" /><col width="150" /><col width="150" /><col width="150" /><col width="250" /><col width="201" /><col /></colgroup>
                <thead><tr><th>搜索对象</th><th>搜索对象类型</th><th>显示/执行对象</th><th>显示对象类型</th><th>路径</th><th>快捷键</th><th aria-label="其他" /></tr></thead>
              </ResultTable>
            </ResultBox>
            <GreyStrip />
            <TabStrip $b={2} $h={27}>
              <PanelTab><Icon n="winBlue" />输出</PanelTab>
              <PanelTab><Icon n="winDots" />进度</PanelTab>
              <PanelTab $on><Icon n="winClock" />快速搜索结果</PanelTab>
            </TabStrip>
          </Results>
        </Column>
      </Main>

      <Status>
        <Cell $w={185} /><Cell $w={145} /><Cell $w={115}>FX5U</Cell><Cell $w={155}>本站</Cell><Cell $w={166} /><Cell $w={74} /><Cell $w={43} $off>CAP</Cell><Cell $w={51}>NUM</Cell>
      </Status>
      <TaskBar>
        <TaskApp $gap={108} aria-label="小组件"><AppIcon n="widgets" /></TaskApp>
        {["start", "task", "mcgs", "leaf.", "snip", "ccf.", "edge.", "vs", "files.", "probe", "db", "fly", "qc", "term.", "ds", "android", "obs.", "gearApp.", "tram.", "mitsu1."].map(a => {
          const n = a.replace(".", "");
          return <TaskApp key={a} $run={a.endsWith(".")} aria-label={n}><AppIcon n={n} /></TaskApp>;
        })}
        <TaskApp $w={67} $run="on" aria-label="GX Works3"><Tile><AppIcon n="mitsu2" /></Tile></TaskApp>
        <TrayItem $w={40} aria-label="更多应用"><svg width="20" height="6"><path fill="#222" d="M0 1h4v4H0zM8 1h4v4H8zM16 1h4v4h-4z" /></svg></TrayItem>
        <Tray>
          <TrayItem $w={40} aria-label="隐藏图标"><svg width="14" height="9"><path fill="none" stroke="currentColor" strokeWidth="1.5" d="M1 8l6-6 6 6" /></svg></TrayItem>
          <TrayItem $w={40} aria-label="云"><svg width="22" height="16"><path fill="#b9b9b9" stroke="#444" d="M4 14.5c-4-1-4-6 0-7 1-8 12-8 13-1 5 1 5 7 0 8z" /><path fill="#666" d="M4 7c2-7 12-7 13-1l-8 3z" /></svg></TrayItem>
          <TrayItem $w={40} aria-label="麦克风"><svg width="14" height="22"><rect x="4" y="1" width="6" height="12" rx="3" fill="#cfe3ee" stroke="#3a5a6c" /><path fill="none" stroke="#3a5a6c" strokeWidth="1.5" d="M1 9c0 9 12 9 12 0M7 16v5" /></svg></TrayItem>
          <TrayItem $w={40}>中</TrayItem>
          <TrayItem $w={58}>拼</TrayItem>
          <TrayItem $w={31} aria-label="网络"><svg width="20" height="16"><g fill="none" stroke="currentColor" strokeWidth="1.5"><path d="M1 6c5-6 13-6 18 0M4 9c4-4 8-4 12 0M7 12c2-2 4-2 6 0" /></g><circle cx="10" cy="14" r="1.5" /></svg></TrayItem>
          <TrayItem $w={31} aria-label="音量"><svg width="20" height="16"><g fill="none" stroke="currentColor" strokeWidth="1.5"><path d="M1 5.5h3l4-4v13l-4-4H1zM11 5c2 2 2 4 0 6M14 3c3 3 3 7 0 10M17 1c4 4 4 10 0 14" /></g></svg></TrayItem>
          <TrayItem $w={31} aria-label="电池"><svg width="20" height="18"><path fill="#333" stroke="#222" d="M2.5 5.5h14v10h-14z" /><path fill="#222" d="M17 8h3v5h-3zM4 0L0 8h3l-1 6 5-8H4l2-6z" /></svg></TrayItem>
          <ClockText>22:21<br />2024/12/1</ClockText>
          <TrayItem $w={36} aria-label="通知"><svg width="20" height="20"><path fill="#222" d="M2 15l2-3V7c0-6 11-6 11 0v5l2 3zM7 17h5l-2.5 3z" /><path fill="none" stroke="#fff" strokeWidth="1.5" d="M7 7h4l-4 5h4" /><path fill="none" stroke="#222" d="M15 1h4l-4 4h4" /></svg></TrayItem>
        </Tray>
      </TaskBar>

      <Layer>
        <Dialog role="dialog" aria-label="添加新模块">
          <DialogHead>添加新模块<button aria-label="关闭"><Cross s={13} w={1.2} /></button></DialogHead>
          <DialogFind><input aria-label="搜索" placeholder="搜索" /><FlatButton $w={85} $h={26}>搜索(F)</FlatButton></DialogFind>
          <PropTable>
            <colgroup><col width="18" /><col width="242" /><col /></colgroup>
            <tbody>
              {propRows.map(r => r.group
                ? <tr key={r.group}><td /><PropGroup colSpan="2" $sub={r.sub}>{r.group}</PropGroup></tr>
                : <tr key={r.name}><td />
                    <PropName $on={r.on} $off={r.off} $sub={r.sub}><div>{r.name}</div></PropName>
                    <PropValue $off={r.off}><div>{r.icon && <Small n="info" />}{r.pick ? <><select aria-label={r.name} defaultValue={r.value}><option>{r.value}</option></select><i><Down s={6} /></i></> : r.value}</div></PropValue>
                  </tr>)}
            </tbody>
          </PropTable>
          <PropBlank />
          <PropNote><b>型号</b><p>选择型号。</p></PropNote>
          <DialogFoot>
            <FlatButton $w={86} $h={26} $main>确定</FlatButton><FlatButton $w={85} $h={26}>取消</FlatButton>
            <svg width="12" height="12"><path fill="#a5a5a5" d="M9 0h2v2H9zM5 4h2v2H5zM9 4h2v2H9zM1 8h2v2H1zM5 8h2v2H5zM9 8h2v2H9z" /></svg>
          </DialogFoot>
        </Dialog>
        <Pointer width="14" height="20" viewBox="0 0 14 20"><path fill="#fff" stroke="#555" d="M1.5 1.5v14l3.5-3 2.5 6 2.5-1-2.5-6h4.5z" /></Pointer>
      </Layer>
    </Shell>
  );
}
